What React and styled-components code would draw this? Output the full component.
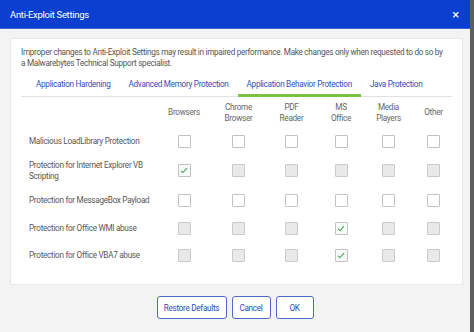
import styled, { createGlobalStyle } from "styled-components";

const GlobalStyle = createGlobalStyle`
  html, body {
    margin: 0;
    padding: 0;
    background: #5e5e5e;
  }
  body {
    font-family: Roboto, "Liberation Sans", sans-serif;
    letter-spacing: -0.3px;
  }
`;

const Dialog = styled.div`
  width: 470px;
  height: 332px;
  background: #f3f3f3;
  display: flex;
  flex-direction: column;
`;

const TitleBar = styled.div`
  height: 29px;
  background: #0b3fcf;
  border-bottom: 1px solid #3c66dc;
  box-sizing: border-box;
  display: flex;
  align-items: center;
  justify-content: space-between;
  padding: 0 10px 0 10px;
  color: #fff;
  font-size: 9.5px;
`;

const Close = styled.span`
  font-size: 13px;
  line-height: 1;
  margin-right: 1px;
`;

const Body = styled.div`
  padding: 9px 7px 0 10px;
`;

const Panel = styled.div`
  background: #fff;
  border: 1px solid #e8e8e8;
  height: 247px;
  box-sizing: border-box;
  padding: 8px 10px 0 10px;
`;

const Intro = styled.p`
  margin: 0;
  padding-right: 8px;
  font-size: 8.2px;
  line-height: 11px;
  color: #555;
`;

const TabList = styled.div`
  display: flex;
  margin-top: 4px;
  padding-left: 6px;
  border-bottom: 1px solid #e2e2e2;
`;

const Tab = styled.div`
  padding: 0 9px;
  height: 24px;
  display: flex;
  align-items: center;
  white-space: nowrap;
  font-size: 8.2px;
  color: #2d4fbf;
  box-sizing: border-box;
  border-bottom: 3px solid ${(p) => (p.$active ? "#7cc142" : "transparent")};
  margin-bottom: -1px;
`;

const Table = styled.div`
  display: grid;
  grid-template-columns: 136px 54px 55px 51px 48px 47px 43px;
  color: #585858;
  font-size: 8.2px;
`;

const HeadCell = styled.div`
  height: 31px;
  display: flex;
  align-items: center;
  justify-content: center;
  text-align: center;
  line-height: 11px;
  color: #666;
`;

const Label = styled.div`
  height: ${(p) => p.$h}px;
  display: flex;
  align-items: center;
  padding-left: 8px;
  line-height: 11px;
  white-space: nowrap;
`;

const Cell = styled.div`
  height: ${(p) => p.$h}px;
  display: flex;
  align-items: center;
  justify-content: center;
`;

const Box = styled.div`
  width: 13px;
  height: 13px;
  box-sizing: border-box;
  border: 1px solid ${(p) => (p.$disabled ? "#cacaca" : "#c2c2c2")};
  background: ${(p) => (p.$disabled ? "#e9e9e9" : p.$checked ? "#f6faf6" : "#fff")};
  border-radius: 1px;
  display: flex;
  align-items: center;
  justify-content: center;
`;

const Footer = styled.div`
  display: flex;
  justify-content: center;
  gap: 5px;
  padding-top: 11px;
`;

const Button = styled.button`
  height: 23px;
  width: ${(p) => p.$w}px;
  background: #fff;
  border: 1px solid #5068c6;
  border-radius: 3px;
  color: #2f4db4;
  font-family: Roboto, "Liberation Sans", sans-serif;
  letter-spacing: -0.3px;
  font-size: 8.2px;
  padding: 0;
`;

const Check = () => (
  <svg width="8" height="7" viewBox="0 0 8 7">
    <path d="M1 3.8 L3 5.6 L7 1.2" fill="none" stroke="#4aa05a" strokeWidth="1.1" />
  </svg>
);

const headers = [
  ["Browsers"],
  ["Chrome", "Browser"],
  ["PDF", "Reader"],
  ["MS", "Office"],
  ["Media", "Players"],
  ["Other"],
];

// d = disabled, e = enabled, c = checked
const rows = [
  { label: ["Malicious LoadLibrary Protection"], h: 26, cells: "eeeeee" },
  { label: ["Protection for Internet Explorer VB", "Scripting"], h: 33, cells: "cddddd" },
  { label: ["Protection for MessageBox Payload"], h: 27, cells: "eeeeee" },
  { label: ["Protection for Office WMI abuse"], h: 28, cells: "dddcdd" },
  { label: ["Protection for Office VBA7 abuse"], h: 26, cells: "dddcdd" },
];

function Lines({ parts }) {
  return parts.map((t, i) => (
    <span key={i}>
      {i > 0 && <br />}
      {t}
    </span>
  ));
}

export default function App() {
  return (
    <>
      <GlobalStyle />
      <Dialog>
        <TitleBar>
          <span>Anti-Exploit Settings</span>
          <Close>×</Close>
        </TitleBar>
        <Body>
          <Panel>
            <Intro>
              Improper changes to Anti-Exploit Settings may result in impaired performance. Make changes only when requested to do so by a Malwarebytes Technical Support specialist.
            </Intro>
            <TabList>
              <Tab>Application Hardening</Tab>
              <Tab>Advanced Memory Protection</Tab>
              <Tab $active>Application Behavior Protection</Tab>
              <Tab>Java Protection</Tab>
            </TabList>
            <Table>
              <HeadCell />
              {headers.map((h, i) => (
                <HeadCell key={i}>
                  <div>
                    <Lines parts={h} />
                  </div>
                </HeadCell>
              ))}
              {rows.map((r, ri) => (
                <>
                  <Label key={"l" + ri} $h={r.h}>
                    <div>
                      <Lines parts={r.label} />
                    </div>
                  </Label>
                  {r.cells.split("").map((c, ci) => (
                    <Cell key={ri + "-" + ci} $h={r.h}>
                      <Box $disabled={c === "d"} $checked={c === "c"}>
                        {c === "c" && <Check />}
                      </Box>
                    </Cell>
                  ))}
                </>
              ))}
            </Table>
          </Panel>
        </Body>
        <Footer>
          <Button $w={70}>Restore Defaults</Button>
          <Button $w={39}>Cancel</Button>
          <Button $w={38}>OK</Button>
        </Footer>
      </Dialog>
    </>
  );
}
